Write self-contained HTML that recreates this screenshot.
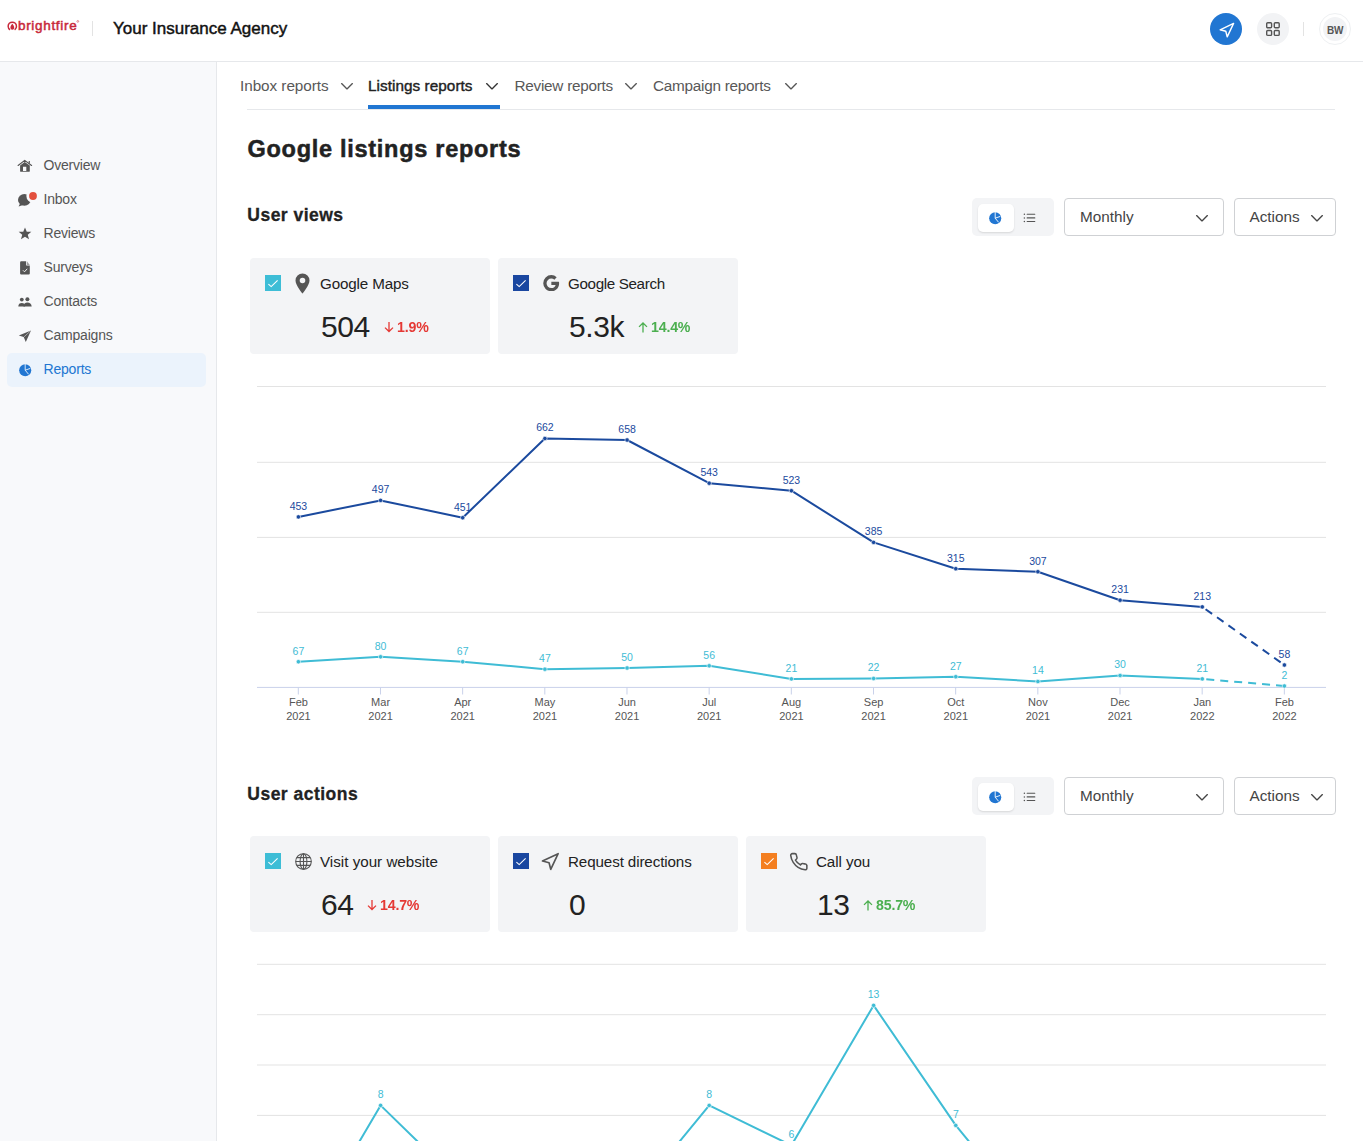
<!DOCTYPE html>
<html><head><meta charset="utf-8"><title>Google listings reports</title>
<style>
html,body{margin:0;padding:0;}
body{width:1363px;height:1141px;overflow:hidden;position:relative;background:#fff;font-family:'Liberation Sans',sans-serif;}
.t{position:absolute;white-space:nowrap;}
#hdr{position:absolute;left:0;top:0;width:1363px;height:61px;border-bottom:1px solid #e6e8eb;background:#fff}
#side{position:absolute;left:0;top:62px;width:216px;height:1079px;background:#f8f9fb;border-right:1px solid #e6e8eb}
</style></head><body>
<div id="hdr"></div>
<svg style="position:absolute;left:6px;top:18px" width="76" height="20" viewBox="0 0 76 20">
<g fill="#c8283a">
<path d="M1.4 8.3a4.9 4.9 0 0 1 9.8 0c0 1.7-.9 3.2-2.2 4.1l-.8-1.3c.9-.6 1.5-1.6 1.5-2.8a3.4 3.4 0 0 0-6.8 0c0 1.2.6 2.2 1.5 2.8l-.8 1.3A4.9 4.9 0 0 1 1.4 8.3z"/>
<path d="M6.3 5.8c1.2 1.5 1.9 2.7 1.9 4a1.9 1.9 0 0 1-3.8 0c0-1.3.7-2.5 1.9-4z"/>
</g>
<text x="12" y="12.4" font-family="Liberation Sans" font-size="13.5" font-weight="400" fill="#c8283a" stroke="#c8283a" stroke-width="0.5" letter-spacing="0.68">brightfire</text>
<circle cx="71.8" cy="3.4" r="0.9" fill="none" stroke="#c8283a" stroke-width=".5"/>
</svg>
<div style="position:absolute;left:92px;top:21px;width:1px;height:15px;background:#e3e3e3"></div>
<div class="t" style="left:113px;top:19.81px;font-size:17px;line-height:17px;color:#111;font-weight:400;-webkit-text-stroke:0.45px #111;letter-spacing:0px;">Your Insurance Agency</div>
<div style="position:absolute;left:1210px;top:12.5px;width:32px;height:32px;border-radius:50%;background:#2176d2"></div>
<svg style="position:absolute;left:1217.5px;top:21.5px" width="17" height="17" viewBox="0 0 24 24"><polygon points="3 11 22 2 13 21 11 13 3 11" fill="none" stroke="#fff" stroke-width="2" stroke-linejoin="round"/></svg>
<div style="position:absolute;left:1257px;top:12.5px;width:32px;height:32px;border-radius:50%;background:#f2f3f5"></div>
<svg style="position:absolute;left:1265px;top:21px" width="16" height="16" viewBox="0 0 16 16"><g fill="none" stroke="#555" stroke-width="1.4"><rect x="1.7" y="1.8" width="4.9" height="4.9" rx="1"/><rect x="9.3" y="1.8" width="4.9" height="4.9" rx="1"/><rect x="1.7" y="9.5" width="4.9" height="4.9" rx="1"/><rect x="9.3" y="9.5" width="4.9" height="4.9" rx="1"/></g></svg>
<div style="position:absolute;left:1303px;top:22px;width:1px;height:14px;background:#e3e3e3"></div>
<div style="position:absolute;left:1319px;top:12.5px;width:30px;height:30px;border-radius:50%;border:1px solid #eef0f2;background:#fff"></div>
<div style="position:absolute;left:1323px;top:16.5px;width:24px;height:24px;border-radius:50%;background:#f2f3f5"></div>
<div class="t" style="left:1327px;top:25.54px;font-size:10px;line-height:10px;color:#555;font-weight:700;letter-spacing:-0.3px;">BW</div>
<div id="side"></div>
<div style="position:absolute;left:7px;top:353px;width:199px;height:34px;border-radius:5px;background:#ebf3fc"></div>
<div class="t" style="left:43.5px;top:157.95px;font-size:14px;line-height:14px;color:#555;font-weight:400;letter-spacing:-0.2px;">Overview</div>
<div class="t" style="left:43.5px;top:191.95px;font-size:14px;line-height:14px;color:#555;font-weight:400;letter-spacing:-0.2px;">Inbox</div>
<div class="t" style="left:43.5px;top:225.95px;font-size:14px;line-height:14px;color:#555;font-weight:400;letter-spacing:-0.2px;">Reviews</div>
<div class="t" style="left:43.5px;top:259.95px;font-size:14px;line-height:14px;color:#555;font-weight:400;letter-spacing:-0.2px;">Surveys</div>
<div class="t" style="left:43.5px;top:293.95px;font-size:14px;line-height:14px;color:#555;font-weight:400;letter-spacing:-0.2px;">Contacts</div>
<div class="t" style="left:43.5px;top:327.95px;font-size:14px;line-height:14px;color:#555;font-weight:400;letter-spacing:-0.2px;">Campaigns</div>
<div class="t" style="left:43.5px;top:361.95px;font-size:14px;line-height:14px;color:#2176d2;font-weight:400;letter-spacing:-0.2px;">Reports</div>
<svg style="position:absolute;left:14px;top:155px" width="24" height="21" viewBox="0 0 24 21"><path d="M4.1 10.5 10.7 5.4 17.6 10.5" fill="none" stroke="#555" stroke-width="1.15" stroke-linejoin="round" stroke-linecap="round"/><rect x="14.7" y="6" width="1.15" height="2.6" fill="#555"/><path fill-rule="evenodd" d="M6.1 10.6 10.7 7 15.8 10.6V15.9a.9.9 0 0 1-.9.9H7a.9.9 0 0 1-.9-.9zM9 11.8h3.3v4.1H9z" fill="#555"/></svg>
<svg style="position:absolute;left:17px;top:191px" width="22" height="17" viewBox="0 0 22 17"><defs><mask id="mk"><rect width="22" height="17" fill="#fff"/><circle cx="16" cy="5" r="6.6" fill="#000"/></mask></defs><g mask="url(#mk)" fill="#555"><ellipse cx="7.4" cy="8.9" rx="6.4" ry="5.9"/><path d="M3 12.5 1.6 15.6 7.5 13.6z"/></g><circle cx="16" cy="5" r="3.9" fill="#e3503e"/></svg>
<svg style="position:absolute;left:18px;top:227px" width="14" height="13" viewBox="0 0 24 23"><polygon points="12 0.8 15.1 8.2 23.2 8.6 16.9 13.7 19.1 21.6 12 17.2 4.9 21.6 7.1 13.7 0.8 8.6 8.9 8.2" fill="#555"/></svg>
<svg style="position:absolute;left:20px;top:261px" width="10" height="14" viewBox="0 0 10 14"><path d="M1.2 0.3h4.9v3.6c0 .4.3.7.7.7h3v7.9a1.1 1.1 0 0 1-1.1 1.1H1.2a1.1 1.1 0 0 1-1.1-1.1V1.4A1.1 1.1 0 0 1 1.2.3z" fill="#555"/><path d="M6.9 0.3l2.9 3.6H6.9z" fill="#555" opacity=".55"/><path d="M3 9.3l1.5 1.5 2.7-3" fill="none" stroke="#fff" stroke-width=".9"/></svg>
<svg style="position:absolute;left:18px;top:297px" width="14" height="10" viewBox="0 0 14 10"><circle cx="3.8" cy="2.6" r="1.9" fill="#555"/><circle cx="9.4" cy="2.2" r="2" fill="#555"/><path d="M0.3 9.4c0-2.2 1.4-3.4 3.5-3.4s3.3 1.2 3.3 3.4z" fill="#555"/><path d="M5.4 9.4c.3-2.4 1.7-3.8 4-3.8 2.4 0 4 1.4 4.3 3.8z" fill="#555"/></svg>
<svg style="position:absolute;left:18px;top:329.5px" width="14" height="13" viewBox="0 0 14 13"><path d="M13 0.4 0.8 5.5l4.9 1.6 2.1 5 5.2-11.7z" fill="#555"/><path d="M12.6 0.8 5.9 7" stroke="#f8f9fb" stroke-width=".5"/></svg>
<svg style="position:absolute;left:19px;top:363.5px" width="13" height="13" viewBox="0 0 13 13"><circle cx="6.2" cy="6.2" r="6.05" fill="#2176d2"/><path d="M6.2 0V6.2L11.3 4.4M6.2 6.2 9.6 10.3" fill="none" stroke="#ebf3fc" stroke-width=".9"/></svg>
<div style="position:absolute;left:247px;top:109px;width:1088px;height:1px;background:#e6e8eb"></div>
<div style="position:absolute;left:368px;top:105px;width:132px;height:4px;background:#2176d2"></div>
<div class="t" style="left:240px;top:78.45px;font-size:15.3px;line-height:15.3px;color:#585858;font-weight:400;letter-spacing:-0.05px;">Inbox reports</div>
<svg style="position:absolute;left:340px;top:81.5px" width="14" height="8.5" viewBox="-1 -1 14 8.5"><path d="M0.6 0.6 6.0 5.9 11.4 0.6" fill="none" stroke="#555" stroke-width="1.35" stroke-linecap="round" stroke-linejoin="round"/></svg>
<div class="t" style="left:368px;top:78.45px;font-size:15.3px;line-height:15.3px;color:#222;font-weight:400;-webkit-text-stroke:0.4px #222;letter-spacing:0.05px;">Listings reports</div>
<svg style="position:absolute;left:485px;top:81.5px" width="14" height="8.5" viewBox="-1 -1 14 8.5"><path d="M0.6 0.6 6.0 5.9 11.4 0.6" fill="none" stroke="#333" stroke-width="1.35" stroke-linecap="round" stroke-linejoin="round"/></svg>
<div class="t" style="left:514.5px;top:78.45px;font-size:15.3px;line-height:15.3px;color:#585858;font-weight:400;letter-spacing:-0.25px;">Review reports</div>
<svg style="position:absolute;left:623.5px;top:81.5px" width="14" height="8.5" viewBox="-1 -1 14 8.5"><path d="M0.6 0.6 6.0 5.9 11.4 0.6" fill="none" stroke="#555" stroke-width="1.35" stroke-linecap="round" stroke-linejoin="round"/></svg>
<div class="t" style="left:653px;top:78.45px;font-size:15.3px;line-height:15.3px;color:#585858;font-weight:400;letter-spacing:-0.25px;">Campaign reports</div>
<svg style="position:absolute;left:783.5px;top:81.5px" width="14" height="8.5" viewBox="-1 -1 14 8.5"><path d="M0.6 0.6 6.0 5.9 11.4 0.6" fill="none" stroke="#555" stroke-width="1.35" stroke-linecap="round" stroke-linejoin="round"/></svg>
<div class="t" style="left:247.5px;top:137.71px;font-size:23.5px;line-height:23.5px;color:#222;font-weight:700;letter-spacing:0.72px;-webkit-text-stroke:0.5px #222;">Google listings reports</div>
<div class="t" style="left:247.3px;top:207.29px;font-size:17.5px;line-height:17.5px;color:#222;font-weight:700;letter-spacing:0.48px;-webkit-text-stroke:0.3px #222;">User views</div>
<div style="position:absolute;left:972px;top:198px;width:82px;height:38px;border-radius:5px;background:#f3f4f6"></div>
<div style="position:absolute;left:978px;top:204px;width:36px;height:28px;border-radius:5px;background:#fff;box-shadow:0 1px 2px rgba(0,0,0,.12)"></div>
<svg style="position:absolute;left:989px;top:211.5px" width="13" height="13" viewBox="0 0 13 13"><circle cx="6.2" cy="6.2" r="6.05" fill="#2176d2"/><path d="M6.2 0V6.2L11.3 4.4M6.2 6.2 9.6 10.3" fill="none" stroke="#fff" stroke-width=".9"/></svg>
<svg style="position:absolute;left:1023px;top:213px" width="13" height="11" viewBox="0 0 13 11"><g fill="#555"><circle cx="1.4" cy="1.3" r=".75"/><circle cx="1.4" cy="4.9" r=".75"/><circle cx="1.4" cy="8.5" r=".75"/><rect x="3.6" y=".75" width="8.7" height="1.1" rx=".5"/><rect x="3.6" y="4.35" width="8.7" height="1.1" rx=".5"/><rect x="3.6" y="7.95" width="8.7" height="1.1" rx=".5"/></g></svg>
<div style="position:absolute;left:1064px;top:198px;width:158px;height:36px;border-radius:4px;border:1px solid #cfd1d4;background:#fff"></div>
<div class="t" style="left:1080px;top:209.25px;font-size:15.3px;line-height:15.3px;color:#444;font-weight:400;">Monthly</div>
<svg style="position:absolute;left:1195px;top:213.5px" width="14" height="8.5" viewBox="-1 -1 14 8.5"><path d="M0.6 0.6 6.0 5.9 11.4 0.6" fill="none" stroke="#444" stroke-width="1.35" stroke-linecap="round" stroke-linejoin="round"/></svg>
<div style="position:absolute;left:1234px;top:198px;width:100px;height:36px;border-radius:4px;border:1px solid #cfd1d4;background:#fff"></div>
<div class="t" style="left:1249.5px;top:209.25px;font-size:15.3px;line-height:15.3px;color:#444;font-weight:400;">Actions</div>
<svg style="position:absolute;left:1310px;top:214px" width="14" height="8.5" viewBox="-1 -1 14 8.5"><path d="M0.6 0.6 6.0 5.9 11.4 0.6" fill="none" stroke="#444" stroke-width="1.35" stroke-linecap="round" stroke-linejoin="round"/></svg>
<div class="t" style="left:247.3px;top:786.49px;font-size:17.5px;line-height:17.5px;color:#222;font-weight:700;letter-spacing:0.48px;-webkit-text-stroke:0.3px #222;">User actions</div>
<div style="position:absolute;left:972px;top:777px;width:82px;height:38px;border-radius:5px;background:#f3f4f6"></div>
<div style="position:absolute;left:978px;top:783px;width:36px;height:28px;border-radius:5px;background:#fff;box-shadow:0 1px 2px rgba(0,0,0,.12)"></div>
<svg style="position:absolute;left:989px;top:790.5px" width="13" height="13" viewBox="0 0 13 13"><circle cx="6.2" cy="6.2" r="6.05" fill="#2176d2"/><path d="M6.2 0V6.2L11.3 4.4M6.2 6.2 9.6 10.3" fill="none" stroke="#fff" stroke-width=".9"/></svg>
<svg style="position:absolute;left:1023px;top:792px" width="13" height="11" viewBox="0 0 13 11"><g fill="#555"><circle cx="1.4" cy="1.3" r=".75"/><circle cx="1.4" cy="4.9" r=".75"/><circle cx="1.4" cy="8.5" r=".75"/><rect x="3.6" y=".75" width="8.7" height="1.1" rx=".5"/><rect x="3.6" y="4.35" width="8.7" height="1.1" rx=".5"/><rect x="3.6" y="7.95" width="8.7" height="1.1" rx=".5"/></g></svg>
<div style="position:absolute;left:1064px;top:777px;width:158px;height:36px;border-radius:4px;border:1px solid #cfd1d4;background:#fff"></div>
<div class="t" style="left:1080px;top:788.25px;font-size:15.3px;line-height:15.3px;color:#444;font-weight:400;">Monthly</div>
<svg style="position:absolute;left:1195px;top:792.5px" width="14" height="8.5" viewBox="-1 -1 14 8.5"><path d="M0.6 0.6 6.0 5.9 11.4 0.6" fill="none" stroke="#444" stroke-width="1.35" stroke-linecap="round" stroke-linejoin="round"/></svg>
<div style="position:absolute;left:1234px;top:777px;width:100px;height:36px;border-radius:4px;border:1px solid #cfd1d4;background:#fff"></div>
<div class="t" style="left:1249.5px;top:788.25px;font-size:15.3px;line-height:15.3px;color:#444;font-weight:400;">Actions</div>
<svg style="position:absolute;left:1310px;top:793px" width="14" height="8.5" viewBox="-1 -1 14 8.5"><path d="M0.6 0.6 6.0 5.9 11.4 0.6" fill="none" stroke="#444" stroke-width="1.35" stroke-linecap="round" stroke-linejoin="round"/></svg>
<div style="position:absolute;left:250px;top:258px;width:240px;height:96.2px;border-radius:4px;background:#f3f4f6"></div>
<svg style="position:absolute;left:265px;top:275px" width="16" height="16" viewBox="0 0 16 16"><rect width="16" height="16" fill="#3dbdd6"/><path d="M3.4 9.2l2.8 2.4 6.4-6.2" fill="none" stroke="#fff" stroke-width="1.1"/></svg>
<svg style="position:absolute;left:295px;top:273px" width="15" height="21" viewBox="0 0 15 21"><path d="M7.5 0.5A7 7 0 0 0 .5 7.5c0 4.8 7 13 7 13s7-8.2 7-13a7 7 0 0 0-7-7zm0 9.8a2.8 2.8 0 1 1 0-5.6 2.8 2.8 0 0 1 0 5.6z" fill="#555"/></svg>
<div class="t" style="left:320px;top:276.13px;font-size:15.2px;line-height:15.2px;color:#222;font-weight:400;letter-spacing:-0.15px;">Google Maps</div>
<div class="t" style="left:321px;top:311.61px;font-size:30px;line-height:30px;color:#222;font-weight:400;letter-spacing:-0.4px;">504</div>
<svg style="position:absolute;left:383.5px;top:321.6px" width="10" height="11" viewBox="0 0 10 11"><path d="M5 0V9.5M1 5.6 5 9.5l4-3.9" fill="none" stroke="#e53935" stroke-width="1.3"/></svg>
<div class="t" style="left:396.5px;top:319.08px;font-size:15.5px;line-height:15.5px;color:#e53935;font-weight:700;letter-spacing:-0.2px;transform:scaleX(.915);transform-origin:0 0;">1.9%</div>
<div style="position:absolute;left:498px;top:258px;width:240px;height:96.2px;border-radius:4px;background:#f3f4f6"></div>
<svg style="position:absolute;left:513px;top:275px" width="16" height="16" viewBox="0 0 16 16"><rect width="16" height="16" fill="#1a47a0"/><path d="M3.4 9.2l2.8 2.4 6.4-6.2" fill="none" stroke="#fff" stroke-width="1.1"/></svg>
<svg style="position:absolute;left:543px;top:274.7px" width="16.5" height="16.5" viewBox="0 0 17 17"><path d="M16.3 7H8.6v3.2h4.4c-.4 2-2.1 3.3-4.4 3.3a4.9 4.9 0 0 1 0-9.9c1.2 0 2.3.4 3.1 1.2l2.4-2.4A8.3 8.3 0 0 0 8.6.1a8.3 8.3 0 1 0 0 16.7c4.8 0 8-3.4 8-8.2 0-.6 0-1.1-.3-1.6z" fill="#555"/></svg>
<div class="t" style="left:568px;top:276.13px;font-size:15.2px;line-height:15.2px;color:#222;font-weight:400;letter-spacing:-0.35px;">Google Search</div>
<div class="t" style="left:569px;top:311.61px;font-size:30px;line-height:30px;color:#222;font-weight:400;letter-spacing:-0.4px;">5.3k</div>
<svg style="position:absolute;left:638.0px;top:321.6px" width="10" height="11" viewBox="0 0 10 11"><path d="M5 10.5V1M1 4.9 5 1l4 3.9" fill="none" stroke="#4caf50" stroke-width="1.3"/></svg>
<div class="t" style="left:651.0px;top:319.08px;font-size:15.5px;line-height:15.5px;color:#4caf50;font-weight:700;letter-spacing:-0.2px;transform:scaleX(.915);transform-origin:0 0;">14.4%</div>
<div style="position:absolute;left:250px;top:836.3px;width:240px;height:96.2px;border-radius:4px;background:#f3f4f6"></div>
<svg style="position:absolute;left:265px;top:853.3px" width="16" height="16" viewBox="0 0 16 16"><rect width="16" height="16" fill="#3dbdd6"/><path d="M3.4 9.2l2.8 2.4 6.4-6.2" fill="none" stroke="#fff" stroke-width="1.1"/></svg>
<svg style="position:absolute;left:295px;top:853.3px" width="17" height="17" viewBox="0 0 17 17"><g fill="none" stroke="#555" stroke-width="1.1"><circle cx="8.5" cy="8.5" r="7.8"/><ellipse cx="8.5" cy="8.5" rx="3.4" ry="7.8"/><path d="M8.5 .7v15.6M.7 8.5h15.6M1.8 4.6h13.4M1.8 12.4h13.4"/></g></svg>
<div class="t" style="left:320px;top:854.43px;font-size:15.2px;line-height:15.2px;color:#222;font-weight:400;letter-spacing:0px;">Visit your website</div>
<div class="t" style="left:321px;top:889.90px;font-size:30px;line-height:30px;color:#222;font-weight:400;letter-spacing:-0.4px;">64</div>
<svg style="position:absolute;left:367.0px;top:899.9px" width="10" height="11" viewBox="0 0 10 11"><path d="M5 0V9.5M1 5.6 5 9.5l4-3.9" fill="none" stroke="#e53935" stroke-width="1.3"/></svg>
<div class="t" style="left:380.0px;top:897.38px;font-size:15.5px;line-height:15.5px;color:#e53935;font-weight:700;letter-spacing:-0.2px;transform:scaleX(.915);transform-origin:0 0;">14.7%</div>
<div style="position:absolute;left:498px;top:836.3px;width:240px;height:96.2px;border-radius:4px;background:#f3f4f6"></div>
<svg style="position:absolute;left:513px;top:853.3px" width="16" height="16" viewBox="0 0 16 16"><rect width="16" height="16" fill="#1a47a0"/><path d="M3.4 9.2l2.8 2.4 6.4-6.2" fill="none" stroke="#fff" stroke-width="1.1"/></svg>
<svg style="position:absolute;left:540px;top:852.3px" width="19.8" height="19.8" viewBox="0 0 24 24"><polygon points="3 11 22 2 13 21 11 13 3 11" fill="none" stroke="#555" stroke-width="2" stroke-linejoin="round"/></svg>
<div class="t" style="left:568px;top:854.43px;font-size:15.2px;line-height:15.2px;color:#222;font-weight:400;letter-spacing:-0.12px;">Request directions</div>
<div class="t" style="left:569px;top:889.90px;font-size:30px;line-height:30px;color:#222;font-weight:400;letter-spacing:-0.4px;">0</div>
<div style="position:absolute;left:746px;top:836.3px;width:240px;height:96.2px;border-radius:4px;background:#f3f4f6"></div>
<svg style="position:absolute;left:761px;top:853.3px" width="16" height="16" viewBox="0 0 16 16"><rect width="16" height="16" fill="#f47f20"/><path d="M3.4 9.2l2.8 2.4 6.4-6.2" fill="none" stroke="#fff" stroke-width="1.1"/></svg>
<svg style="position:absolute;left:788.5px;top:852.3px" width="19.5" height="19.5" viewBox="0 0 24 24"><path d="M22 16.9v3a2 2 0 0 1-2.2 2 19.8 19.8 0 0 1-8.6-3.1 19.5 19.5 0 0 1-6-6A19.8 19.8 0 0 1 2.1 4.2 2 2 0 0 1 4.1 2h3a2 2 0 0 1 2 1.7c.1 1 .4 1.9.7 2.8a2 2 0 0 1-.5 2.1L8 9.9a16 16 0 0 0 6 6l1.3-1.3a2 2 0 0 1 2.1-.4c.9.3 1.8.6 2.8.7a2 2 0 0 1 1.7 2z" fill="none" stroke="#555" stroke-width="1.9"/></svg>
<div class="t" style="left:816px;top:854.43px;font-size:15.2px;line-height:15.2px;color:#222;font-weight:400;letter-spacing:-0.1px;">Call you</div>
<div class="t" style="left:817px;top:889.90px;font-size:30px;line-height:30px;color:#222;font-weight:400;letter-spacing:-0.4px;">13</div>
<svg style="position:absolute;left:863.0px;top:899.9px" width="10" height="11" viewBox="0 0 10 11"><path d="M5 10.5V1M1 4.9 5 1l4 3.9" fill="none" stroke="#4caf50" stroke-width="1.3"/></svg>
<div class="t" style="left:876.0px;top:897.38px;font-size:15.5px;line-height:15.5px;color:#4caf50;font-weight:700;letter-spacing:-0.2px;transform:scaleX(.915);transform-origin:0 0;">85.7%</div>
<svg style="position:absolute;left:0;top:0" width="1363" height="1141" viewBox="0 0 1363 1141" font-family="Liberation Sans"><rect x="257" y="386.0" width="1069" height="1" fill="#e3e3e3"/><rect x="257" y="461.8" width="1069" height="1" fill="#e3e3e3"/><rect x="257" y="536.9" width="1069" height="1" fill="#e3e3e3"/><rect x="257" y="611.8" width="1069" height="1" fill="#e3e3e3"/><rect x="257" y="686.9" width="1069" height="1" fill="#c9d1ea"/><rect x="297.79999999999995" y="687.5" width="1" height="7" fill="#c9d1ea"/><rect x="379.96999999999997" y="687.5" width="1" height="7" fill="#c9d1ea"/><rect x="462.14" y="687.5" width="1" height="7" fill="#c9d1ea"/><rect x="544.31" y="687.5" width="1" height="7" fill="#c9d1ea"/><rect x="626.4799999999999" y="687.5" width="1" height="7" fill="#c9d1ea"/><rect x="708.65" y="687.5" width="1" height="7" fill="#c9d1ea"/><rect x="790.8199999999999" y="687.5" width="1" height="7" fill="#c9d1ea"/><rect x="872.99" y="687.5" width="1" height="7" fill="#c9d1ea"/><rect x="955.16" y="687.5" width="1" height="7" fill="#c9d1ea"/><rect x="1037.33" y="687.5" width="1" height="7" fill="#c9d1ea"/><rect x="1119.5" y="687.5" width="1" height="7" fill="#c9d1ea"/><rect x="1201.67" y="687.5" width="1" height="7" fill="#c9d1ea"/><rect x="1283.8400000000001" y="687.5" width="1" height="7" fill="#c9d1ea"/><text x="298.4" y="705.9" text-anchor="middle" font-size="11" fill="#555">Feb</text><text x="298.4" y="719.9" text-anchor="middle" font-size="11" fill="#555">2021</text><text x="380.6" y="705.9" text-anchor="middle" font-size="11" fill="#555">Mar</text><text x="380.6" y="719.9" text-anchor="middle" font-size="11" fill="#555">2021</text><text x="462.7" y="705.9" text-anchor="middle" font-size="11" fill="#555">Apr</text><text x="462.7" y="719.9" text-anchor="middle" font-size="11" fill="#555">2021</text><text x="544.9" y="705.9" text-anchor="middle" font-size="11" fill="#555">May</text><text x="544.9" y="719.9" text-anchor="middle" font-size="11" fill="#555">2021</text><text x="627.1" y="705.9" text-anchor="middle" font-size="11" fill="#555">Jun</text><text x="627.1" y="719.9" text-anchor="middle" font-size="11" fill="#555">2021</text><text x="709.2" y="705.9" text-anchor="middle" font-size="11" fill="#555">Jul</text><text x="709.2" y="719.9" text-anchor="middle" font-size="11" fill="#555">2021</text><text x="791.4" y="705.9" text-anchor="middle" font-size="11" fill="#555">Aug</text><text x="791.4" y="719.9" text-anchor="middle" font-size="11" fill="#555">2021</text><text x="873.6" y="705.9" text-anchor="middle" font-size="11" fill="#555">Sep</text><text x="873.6" y="719.9" text-anchor="middle" font-size="11" fill="#555">2021</text><text x="955.8" y="705.9" text-anchor="middle" font-size="11" fill="#555">Oct</text><text x="955.8" y="719.9" text-anchor="middle" font-size="11" fill="#555">2021</text><text x="1037.9" y="705.9" text-anchor="middle" font-size="11" fill="#555">Nov</text><text x="1037.9" y="719.9" text-anchor="middle" font-size="11" fill="#555">2021</text><text x="1120.1" y="705.9" text-anchor="middle" font-size="11" fill="#555">Dec</text><text x="1120.1" y="719.9" text-anchor="middle" font-size="11" fill="#555">2021</text><text x="1202.3" y="705.9" text-anchor="middle" font-size="11" fill="#555">Jan</text><text x="1202.3" y="719.9" text-anchor="middle" font-size="11" fill="#555">2022</text><text x="1284.4" y="705.9" text-anchor="middle" font-size="11" fill="#555">Feb</text><text x="1284.4" y="719.9" text-anchor="middle" font-size="11" fill="#555">2022</text><polyline points="298.4,661.7 380.6,656.8 462.7,661.7 544.9,669.2 627.1,668.0 709.2,665.8 791.4,678.9 873.6,678.5 955.8,676.7 1037.9,681.5 1120.1,675.5 1202.3,678.9" fill="none" stroke="#3fbcd5" stroke-width="2" stroke-linejoin="round"/><line x1="1202.3" y1="678.9" x2="1284.4" y2="686.0" stroke="#3fbcd5" stroke-width="2" stroke-dasharray="8 6" stroke-dashoffset="10"/><circle cx="298.4" cy="661.7" r="2.2" fill="#3fbcd5" stroke="#fff" stroke-width="0.6"/><text x="298.4" y="654.5" text-anchor="middle" font-size="10.5" fill="#3fbcd5">67</text><circle cx="380.6" cy="656.8" r="2.2" fill="#3fbcd5" stroke="#fff" stroke-width="0.6"/><text x="380.6" y="649.6" text-anchor="middle" font-size="10.5" fill="#3fbcd5">80</text><circle cx="462.7" cy="661.7" r="2.2" fill="#3fbcd5" stroke="#fff" stroke-width="0.6"/><text x="462.7" y="654.5" text-anchor="middle" font-size="10.5" fill="#3fbcd5">67</text><circle cx="544.9" cy="669.2" r="2.2" fill="#3fbcd5" stroke="#fff" stroke-width="0.6"/><text x="544.9" y="662.0" text-anchor="middle" font-size="10.5" fill="#3fbcd5">47</text><circle cx="627.1" cy="668.0" r="2.2" fill="#3fbcd5" stroke="#fff" stroke-width="0.6"/><text x="627.1" y="660.8" text-anchor="middle" font-size="10.5" fill="#3fbcd5">50</text><circle cx="709.2" cy="665.8" r="2.2" fill="#3fbcd5" stroke="#fff" stroke-width="0.6"/><text x="709.2" y="658.6" text-anchor="middle" font-size="10.5" fill="#3fbcd5">56</text><circle cx="791.4" cy="678.9" r="2.2" fill="#3fbcd5" stroke="#fff" stroke-width="0.6"/><text x="791.4" y="671.7" text-anchor="middle" font-size="10.5" fill="#3fbcd5">21</text><circle cx="873.6" cy="678.5" r="2.2" fill="#3fbcd5" stroke="#fff" stroke-width="0.6"/><text x="873.6" y="671.3" text-anchor="middle" font-size="10.5" fill="#3fbcd5">22</text><circle cx="955.8" cy="676.7" r="2.2" fill="#3fbcd5" stroke="#fff" stroke-width="0.6"/><text x="955.8" y="669.5" text-anchor="middle" font-size="10.5" fill="#3fbcd5">27</text><circle cx="1037.9" cy="681.5" r="2.2" fill="#3fbcd5" stroke="#fff" stroke-width="0.6"/><text x="1037.9" y="674.3" text-anchor="middle" font-size="10.5" fill="#3fbcd5">14</text><circle cx="1120.1" cy="675.5" r="2.2" fill="#3fbcd5" stroke="#fff" stroke-width="0.6"/><text x="1120.1" y="668.3" text-anchor="middle" font-size="10.5" fill="#3fbcd5">30</text><circle cx="1202.3" cy="678.9" r="2.2" fill="#3fbcd5" stroke="#fff" stroke-width="0.6"/><text x="1202.3" y="671.7" text-anchor="middle" font-size="10.5" fill="#3fbcd5">21</text><circle cx="1284.4" cy="686.0" r="2.2" fill="#3fbcd5" stroke="#fff" stroke-width="0.6"/><text x="1284.4" y="678.8" text-anchor="middle" font-size="10.5" fill="#3fbcd5">2</text><polyline points="298.4,516.9 380.6,500.4 462.7,517.7 544.9,438.5 627.1,440.0 709.2,483.2 791.4,490.7 873.6,542.4 955.8,568.7 1037.9,571.7 1120.1,600.2 1202.3,606.9" fill="none" stroke="#1b4a9e" stroke-width="2" stroke-linejoin="round"/><line x1="1202.3" y1="606.9" x2="1284.4" y2="665.0" stroke="#1b4a9e" stroke-width="2" stroke-dasharray="8 6" stroke-dashoffset="10"/><circle cx="298.4" cy="516.9" r="2.2" fill="#1b4a9e" stroke="#fff" stroke-width="0.6"/><text x="298.4" y="509.7" text-anchor="middle" font-size="10.5" fill="#1b4a9e">453</text><circle cx="380.6" cy="500.4" r="2.2" fill="#1b4a9e" stroke="#fff" stroke-width="0.6"/><text x="380.6" y="493.2" text-anchor="middle" font-size="10.5" fill="#1b4a9e">497</text><circle cx="462.7" cy="517.7" r="2.2" fill="#1b4a9e" stroke="#fff" stroke-width="0.6"/><text x="462.7" y="510.5" text-anchor="middle" font-size="10.5" fill="#1b4a9e">451</text><circle cx="544.9" cy="438.5" r="2.2" fill="#1b4a9e" stroke="#fff" stroke-width="0.6"/><text x="544.9" y="431.3" text-anchor="middle" font-size="10.5" fill="#1b4a9e">662</text><circle cx="627.1" cy="440.0" r="2.2" fill="#1b4a9e" stroke="#fff" stroke-width="0.6"/><text x="627.1" y="432.8" text-anchor="middle" font-size="10.5" fill="#1b4a9e">658</text><circle cx="709.2" cy="483.2" r="2.2" fill="#1b4a9e" stroke="#fff" stroke-width="0.6"/><text x="709.2" y="476.0" text-anchor="middle" font-size="10.5" fill="#1b4a9e">543</text><circle cx="791.4" cy="490.7" r="2.2" fill="#1b4a9e" stroke="#fff" stroke-width="0.6"/><text x="791.4" y="483.5" text-anchor="middle" font-size="10.5" fill="#1b4a9e">523</text><circle cx="873.6" cy="542.4" r="2.2" fill="#1b4a9e" stroke="#fff" stroke-width="0.6"/><text x="873.6" y="535.2" text-anchor="middle" font-size="10.5" fill="#1b4a9e">385</text><circle cx="955.8" cy="568.7" r="2.2" fill="#1b4a9e" stroke="#fff" stroke-width="0.6"/><text x="955.8" y="561.5" text-anchor="middle" font-size="10.5" fill="#1b4a9e">315</text><circle cx="1037.9" cy="571.7" r="2.2" fill="#1b4a9e" stroke="#fff" stroke-width="0.6"/><text x="1037.9" y="564.5" text-anchor="middle" font-size="10.5" fill="#1b4a9e">307</text><circle cx="1120.1" cy="600.2" r="2.2" fill="#1b4a9e" stroke="#fff" stroke-width="0.6"/><text x="1120.1" y="593.0" text-anchor="middle" font-size="10.5" fill="#1b4a9e">231</text><circle cx="1202.3" cy="606.9" r="2.2" fill="#1b4a9e" stroke="#fff" stroke-width="0.6"/><text x="1202.3" y="599.7" text-anchor="middle" font-size="10.5" fill="#1b4a9e">213</text><circle cx="1284.4" cy="665.0" r="2.2" fill="#1b4a9e" stroke="#fff" stroke-width="0.6"/><text x="1284.4" y="657.8" text-anchor="middle" font-size="10.5" fill="#1b4a9e">58</text><rect x="257" y="963.8" width="1069" height="1" fill="#e3e3e3"/><rect x="257" y="1014.2" width="1069" height="1" fill="#e3e3e3"/><rect x="257" y="1064.5" width="1069" height="1" fill="#e3e3e3"/><rect x="257" y="1114.9" width="1069" height="1" fill="#e3e3e3"/><polyline points="298.4,1245.4 380.6,1105.4 462.7,1185.4 544.9,1225.4 627.1,1205.4 709.2,1105.4 791.4,1145.4 873.6,1005.4 955.8,1125.4 1037.9,1225.4 1120.1,1205.4 1202.3,1225.4 1284.4,1245.4" fill="none" stroke="#3fbcd5" stroke-width="2" stroke-linejoin="round"/><circle cx="298.4" cy="1245.4" r="2.2" fill="#3fbcd5" stroke="#fff" stroke-width="0.6"/><text x="298.4" y="1238.2" text-anchor="middle" font-size="10.5" fill="#3fbcd5">1</text><circle cx="380.6" cy="1105.4" r="2.2" fill="#3fbcd5" stroke="#fff" stroke-width="0.6"/><text x="380.6" y="1098.2" text-anchor="middle" font-size="10.5" fill="#3fbcd5">8</text><circle cx="462.7" cy="1185.4" r="2.2" fill="#3fbcd5" stroke="#fff" stroke-width="0.6"/><text x="462.7" y="1178.2" text-anchor="middle" font-size="10.5" fill="#3fbcd5">4</text><circle cx="544.9" cy="1225.4" r="2.2" fill="#3fbcd5" stroke="#fff" stroke-width="0.6"/><text x="544.9" y="1218.2" text-anchor="middle" font-size="10.5" fill="#3fbcd5">2</text><circle cx="627.1" cy="1205.4" r="2.2" fill="#3fbcd5" stroke="#fff" stroke-width="0.6"/><text x="627.1" y="1198.2" text-anchor="middle" font-size="10.5" fill="#3fbcd5">3</text><circle cx="709.2" cy="1105.4" r="2.2" fill="#3fbcd5" stroke="#fff" stroke-width="0.6"/><text x="709.2" y="1098.2" text-anchor="middle" font-size="10.5" fill="#3fbcd5">8</text><circle cx="791.4" cy="1145.4" r="2.2" fill="#3fbcd5" stroke="#fff" stroke-width="0.6"/><text x="791.4" y="1138.2" text-anchor="middle" font-size="10.5" fill="#3fbcd5">6</text><circle cx="873.6" cy="1005.4" r="2.2" fill="#3fbcd5" stroke="#fff" stroke-width="0.6"/><text x="873.6" y="998.2" text-anchor="middle" font-size="10.5" fill="#3fbcd5">13</text><circle cx="955.8" cy="1125.4" r="2.2" fill="#3fbcd5" stroke="#fff" stroke-width="0.6"/><text x="955.8" y="1118.2" text-anchor="middle" font-size="10.5" fill="#3fbcd5">7</text><circle cx="1037.9" cy="1225.4" r="2.2" fill="#3fbcd5" stroke="#fff" stroke-width="0.6"/><text x="1037.9" y="1218.2" text-anchor="middle" font-size="10.5" fill="#3fbcd5">2</text><circle cx="1120.1" cy="1205.4" r="2.2" fill="#3fbcd5" stroke="#fff" stroke-width="0.6"/><text x="1120.1" y="1198.2" text-anchor="middle" font-size="10.5" fill="#3fbcd5">3</text><circle cx="1202.3" cy="1225.4" r="2.2" fill="#3fbcd5" stroke="#fff" stroke-width="0.6"/><text x="1202.3" y="1218.2" text-anchor="middle" font-size="10.5" fill="#3fbcd5">2</text><circle cx="1284.4" cy="1245.4" r="2.2" fill="#3fbcd5" stroke="#fff" stroke-width="0.6"/><text x="1284.4" y="1238.2" text-anchor="middle" font-size="10.5" fill="#3fbcd5">1</text></svg>
</body></html>
